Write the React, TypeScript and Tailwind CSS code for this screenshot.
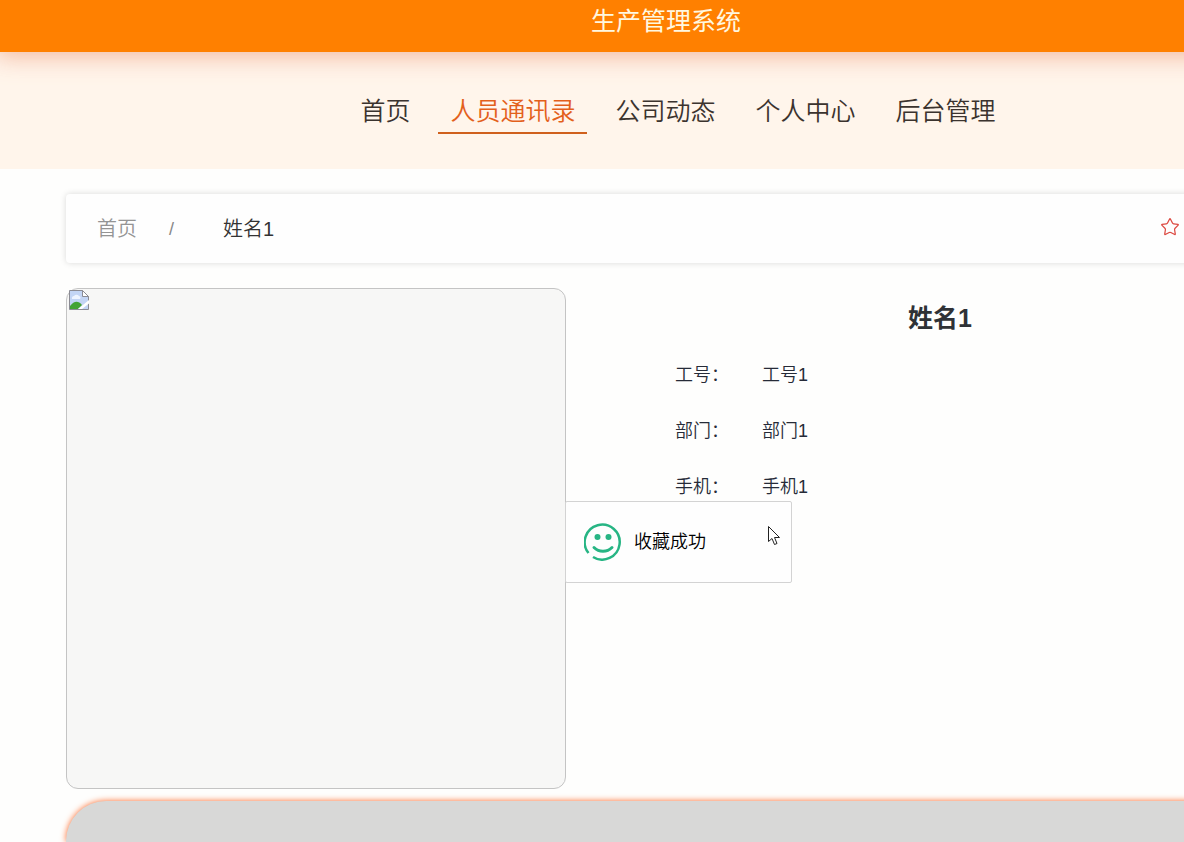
import { Star } from "lucide-react";
import { clsx } from "clsx";

const navigation = [
  { name: "首页", href: "#home" },
  { name: "人员通讯录", href: "#contacts" },
  { name: "公司动态", href: "#news" },
  { name: "个人中心", href: "#profile" },
  { name: "后台管理", href: "#admin" },
];

const details = [
  { label: "工号：", value: "工号1" },
  { label: "部门：", value: "部门1" },
  { label: "手机：", value: "手机1" },
];

function BrokenImageIcon() {
  return (
    <svg width="20" height="20" viewBox="0 0 20 20" aria-hidden="true">
      <path d="M0.5 0.5h13l6 6v13h-19z" fill="#c3d5f5" />
      <path d="M3 9a2.500 2.500 0 0 1 2-3 3 3 0 0 1 5 0 2 2 0 0 1 1 3z" fill="#eef4ff" />
      <path d="M1 19v-3c4-5 8-6 12-1l-4 4z" fill="#43a334" />
      <path d="M0.5 19.5v-19h13l6 6v13z" fill="none" stroke="#8b8b93" />
      <path d="M13.5 0.5v6h6z" fill="#fff" stroke="#8b8b93" />
      <path d="M9 19 20 10v3.500L13 19z" fill="#fff" />
    </svg>
  );
}

function SmileIcon() {
  return (
    <svg width="38" height="38" viewBox="0 0 38 38" fill="none" aria-hidden="true">
      <path d="M4.500 30A17.500 17.500 0 1 1 9 34" stroke="#27b584" strokeWidth="2.500" />
      <circle cx="13.500" cy="14" r="3" fill="#27b584" />
      <circle cx="24.500" cy="14" r="3" fill="#27b584" />
      <path d="M10 24.500c5 5 13 5 18 0" stroke="#27b584" strokeWidth="3" strokeLinecap="round" />
    </svg>
  );
}

function Toast() {
  return (
    <div
      role="status"
      className="absolute left-[499px] top-[213px] flex h-[82px] w-[227px] items-center gap-3 rounded-xs border border-[#d3d3d3] bg-[#fefefe] pb-[1px] pl-[18px] text-lg font-[350] text-black"
    >
      <SmileIcon />
      <span>收藏成功</span>
      <svg className="absolute left-[201px] top-[23px]" width="14" height="21" viewBox="0 0 14 21" aria-hidden="true">
        <path d="M1.500 1.500v15l3.500-3 2.500 6 2.500-1-2.500-6h5z" fill="#fff" stroke="#222" />
      </svg>
    </div>
  );
}

export default function App() {
  return (
    <div className="overflow-hidden bg-[#fefefd] font-['Liberation_Sans','Noto_Sans_CJK_SC',sans-serif] text-[#333]">
      <div className="flex min-h-screen min-w-[1332px] flex-col">
        <header className="relative flex h-[52px] justify-center bg-[#ff8000] pt-[1px] shadow-[0_0_24px_4px_#f0a88acc]">
          <h1 className="text-[25px] leading-10 text-[#fff8e0]">生产管理系统</h1>
        </header>

        <nav className="h-[117px] bg-[#fff5eb] pt-9">
          <ul className="flex justify-center gap-4 pl-6">
            {navigation.map((item) => (
              <li key={item.name}>
                <a
                  href={item.href}
                  className={clsx(
                    "block h-[46px] border-b-2 px-3 text-[25px] font-[350] leading-[46px]",
                    item.href === "#contacts" ? "border-[#d0601c] text-[#e3601b]" : "border-transparent text-[#3b332e]"
                  )}
                >
                  {item.name}
                </a>
              </li>
            ))}
          </ul>
        </nav>

        <main className="flex flex-1 flex-col px-[66px] pt-[25px]">
          {/* Breadcrumb */}
          <div className="flex h-[69px] items-center rounded bg-[#fefefe] pl-[31px] pt-[1px] text-xl font-[350] shadow-[0_0_6px_#00000026]">
            <a href="#home" className="text-[#949494]">首页</a>
            <span className="w-[86px] pl-8 text-lg text-[#888]">/</span>
            <span>姓名1</span>
            <button type="button" aria-label="收藏" className="ml-auto mr-[86px] pb-1 text-[#dc4a42]">
              <Star size={20} strokeWidth={1.5} strokeLinejoin="miter" />
            </button>
          </div>

          <section className="relative mt-[25px] flex">
            <div className="h-[501px] w-[500px] shrink-0 rounded-xl border border-[#c4c4c4] bg-[#f7f7f6] p-[2px] pt-[1px]">
              <BrokenImageIcon />
            </div>
            <div className="ml-12 flex-1 pt-3">
              <h2 className="text-center text-[25px] font-bold leading-9 text-[#2f3236]">姓名1</h2>
              <dl className="mt-[11px] pl-[61px] text-lg font-[350] text-[#262b38]">
                {details.map((item) => (
                  <div key={item.label} className="flex h-14 items-center">
                    <dt className="w-[87px]">{item.label}</dt>
                    <dd>{item.value}</dd>
                  </div>
                ))}
              </dl>
            </div>
            <Toast />
          </section>

          <section className="mt-3 min-h-[41px] flex-1 rounded-t-[40px] bg-[#d8d8d7] shadow-[0_0_6px_#ff6a2a]" />
        </main>
      </div>
    </div>
  );
}
